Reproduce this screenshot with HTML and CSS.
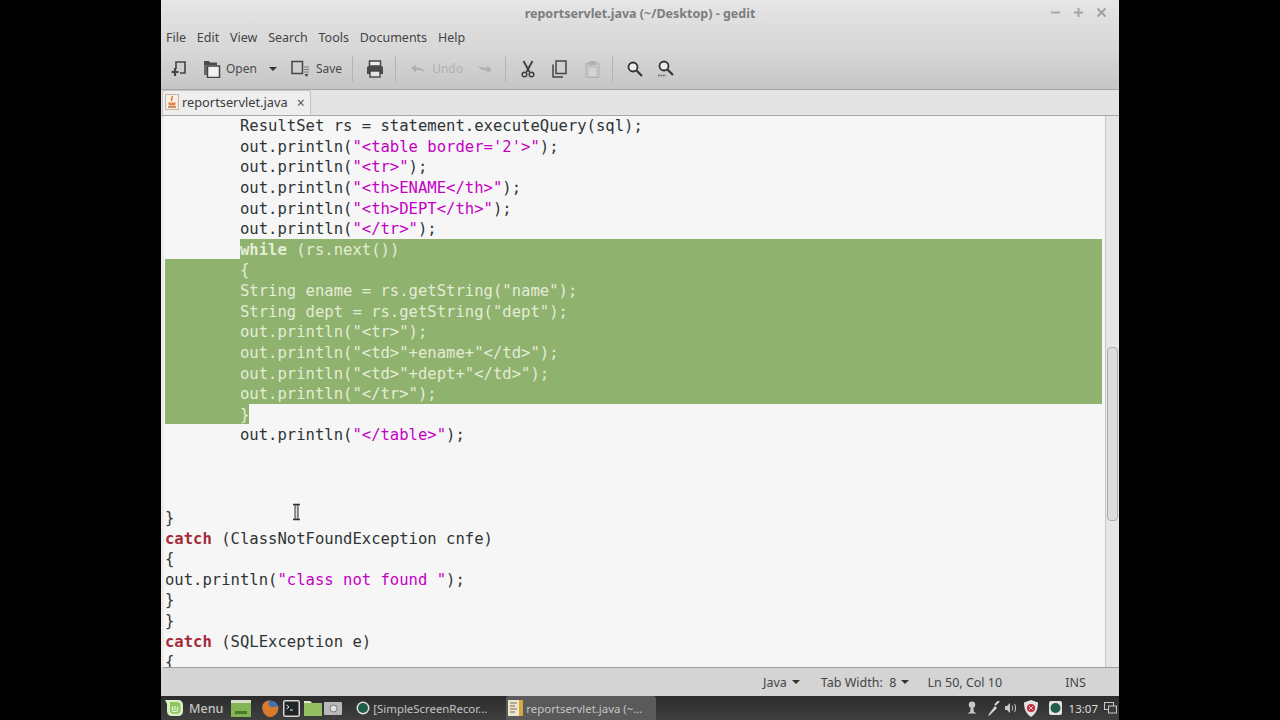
FILE: index.html
```html
<!DOCTYPE html>
<html>
<head>
  <title>reportservlet.java (~/Desktop) - gedit</title>
  <link rel="stylesheet" href="styles.css">
</head>
<body>
  <div class="window">
    <div class="titlebar">
      <div class="title">reportservlet.java (~/Desktop) - gedit</div>
      <div class="win-buttons">
        <svg width="11" height="11" viewBox="0 0 11 11"><path d="M1 5.500h9" stroke="#a8a8a8" stroke-width="2"/></svg>
        <svg width="11" height="11" viewBox="0 0 11 11"><path d="M1 5.500h9M5.500 1v9" stroke="#a4a4a4" stroke-width="2"/></svg>
        <svg width="11" height="11" viewBox="0 0 11 11"><path d="M1.500 1.500l8 8M9.500 1.500l-8 8" stroke="#a0a0a0" stroke-width="2"/></svg>
      </div>
    </div>

    <div class="menubar">
      <span>File</span><span>Edit</span><span>View</span><span>Search</span><span>Tools</span><span>Documents</span><span>Help</span>
    </div>

    <div class="toolbar">
      <svg class="tb-new" width="16" height="18" viewBox="0 0 16 18"><path d="M5 9V2h9v11h-5" fill="none" stroke="#444" stroke-width="1.600"/><path d="M4 8v8M0.500 12h7" stroke="#444" stroke-width="2.200"/></svg>
      <svg class="tb-open" width="18" height="18" viewBox="0 0 18 18"><path d="M1 1h5l1 1.500h7V5H1z" fill="#4a4a4a"/><path d="M1 5h3v10H1z" fill="#6a6a6a"/><rect x="4.500" y="6" width="12" height="11.500" fill="#f0f0f0" stroke="#444" stroke-width="1.500"/></svg>
      <span class="tb-label">Open</span>
      <span class="tb-arrow"></span>
      <svg class="tb-save" width="20" height="18" viewBox="0 0 20 18"><rect x="1" y="1.500" width="10.500" height="12" fill="none" stroke="#444" stroke-width="1.500"/><path d="M13 7h5M13 9.500h5M13 12h5" stroke="#777" stroke-width="1.200"/><path d="M13.500 14h4l-2 3z" fill="#444"/></svg>
      <span class="tb-label">Save</span>
      <span class="tb-sep sep-a"></span>
      <svg class="tb-print" width="18" height="18" viewBox="0 0 18 18"><rect x="3.500" y="1" width="11" height="5" fill="#eee" stroke="#444" stroke-width="1.500"/><path d="M1 8c0-1.500 1-2 2-2h12c1 0 2 .5 2 2v6H1z" fill="#4a4a4a"/><rect x="4" y="11" width="10" height="6" fill="#e4e4e4" stroke="#444" stroke-width="1.400"/></svg>
      <span class="tb-sep sep-b"></span>
      <svg class="tb-undo" width="16" height="10" viewBox="0 0 16 10"><path d="M1 4l5-3v2.500c4 0 7 1 9 5-3-2-5-2.200-9-2.200V8.500z" fill="#b0b0b0"/></svg>
      <span class="tb-label off">Undo</span>
      <svg class="tb-redo" width="16" height="10" viewBox="0 0 16 10"><path d="M15 6l-5 3V6.500C6 6.500 3 5.500 1 1.500c3 2 5 2.200 9 2.200V1.500z" fill="#b0b0b0"/></svg>
      <span class="tb-sep sep-c"></span>
      <svg class="tb-cut" width="14" height="18" viewBox="0 0 14 18"><path d="M2.500 1l6 11M11.500 1l-6 11" stroke="#3f3f3f" stroke-width="1.800"/><circle cx="3.500" cy="14.500" r="2.300" fill="none" stroke="#3f3f3f" stroke-width="1.500"/><circle cx="10.500" cy="14.500" r="2.300" fill="none" stroke="#3f3f3f" stroke-width="1.500"/></svg>
      <svg class="tb-copy" width="15" height="18" viewBox="0 0 15 18"><rect x="4" y="1" width="10" height="12.500" fill="none" stroke="#444" stroke-width="1.500"/><path d="M1 4.500V17h10" fill="none" stroke="#444" stroke-width="1.500"/></svg>
      <svg class="tb-paste" width="15" height="18" viewBox="0 0 15 18"><rect x="1" y="3" width="13" height="14.500" rx="1" fill="#c4c4c4" stroke="#b0b0b0"/><rect x="4" y="1" width="7" height="4" rx="1" fill="#b0b0b0"/><rect x="4" y="8" width="7" height="8" fill="#d4d4d4"/></svg>
      <span class="tb-sep sep-d"></span>
      <svg class="tb-find" width="16" height="16" viewBox="0 0 16 16"><circle cx="6" cy="6" r="4.500" fill="#ececec" stroke="#333" stroke-width="1.800"/><path d="M9.500 9.500l5.500 5.500" stroke="#333" stroke-width="2.200"/></svg>
      <svg class="tb-replace" width="17" height="17" viewBox="0 0 17 17"><circle cx="7" cy="6" r="4.500" fill="#ececec" stroke="#333" stroke-width="1.800"/><path d="M10.500 9.500l5.500 5.500" stroke="#333" stroke-width="2.200"/><path d="M1 15.500h8" stroke="#555" stroke-width="1.400" stroke-dasharray="1.500 1"/></svg>
    </div>

    <div class="tabbar">
      <div class="tab">
        <svg width="14" height="16" viewBox="0 0 14 16"><rect x="0.500" y="0.500" width="13" height="15" fill="#f6efe6" stroke="#c4b8a8"/><path d="M7 2c1.500 2-2 3 0 5" fill="none" stroke="#d8702a" stroke-width="1.400"/><path d="M3 8.500h8l-1 3H4z" fill="#e08a4a"/><path d="M3 13h8" stroke="#c2672a" stroke-width="1.400"/></svg>
        <span class="tab-name">reportservlet.java</span>
        <span class="tab-close">×</span>
      </div>
    </div>

    <div class="editor">
      <div class="code">
        <div class="line">        ResultSet rs = statement.executeQuery(sql);</div>
        <div class="line">        out.println(<i>"&lt;table border='2'&gt;"</i>);</div>
        <div class="line">        out.println(<i>"&lt;tr&gt;"</i>);</div>
        <div class="line">        out.println(<i>"&lt;th&gt;ENAME&lt;/th&gt;"</i>);</div>
        <div class="line">        out.println(<i>"&lt;th&gt;DEPT&lt;/th&gt;"</i>);</div>
        <div class="line">        out.println(<i>"&lt;/tr&gt;"</i>);</div>
        <div class="line">        <span class="sel-rest"><b>while</b> (rs.next())</span></div>
        <div class="line sel">        {</div>
        <div class="line sel">        String ename = rs.getString("name");</div>
        <div class="line sel">        String dept = rs.getString("dept");</div>
        <div class="line sel">        out.println("&lt;tr&gt;");</div>
        <div class="line sel">        out.println("&lt;td&gt;"+ename+"&lt;/td&gt;");</div>
        <div class="line sel">        out.println("&lt;td&gt;"+dept+"&lt;/td&gt;");</div>
        <div class="line sel">        out.println("&lt;/tr&gt;");</div>
        <div class="line"><span class="sel-part">        }</span></div>
        <div class="line">        out.println(<i>"&lt;/table&gt;"</i>);</div>
        <div class="line"> </div>
        <div class="line"> </div>
        <div class="line"> </div>
        <div class="line">}</div>
        <div class="line"><b>catch</b> (ClassNotFoundException cnfe)</div>
        <div class="line">{</div>
        <div class="line">out.println(<i>"class not found "</i>);</div>
        <div class="line">}</div>
        <div class="line">}</div>
        <div class="line"><b>catch</b> (SQLException e)</div>
        <div class="line">{</div>
      </div>
      <div class="scrollbar"><div class="thumb"></div></div>
      <svg class="ibeam" width="9" height="18" viewBox="0 0 9 18"><path d="M1 1.500h7M1 16.500h7" stroke="#333" stroke-width="1.600"/><rect x="3" y="2" width="3" height="14" fill="#d8d8d8" stroke="#333"/></svg>
    </div>

    <div class="statusbar">
      <span class="st-lang">Java</span><span class="tb-arrow st-a1"></span>
      <span class="st-tab">Tab Width:&nbsp; 8</span><span class="tb-arrow st-a2"></span>
      <span class="st-pos">Ln 50, Col 10</span>
      <span class="st-ins">INS</span>
    </div>

    <div class="panel">
      <svg class="p-mint" width="19" height="18" viewBox="0 0 19 18"><path d="M0 1h13c3 0 5 2 5 5v6c0 3-2 5-5 5H7c-3 0-5-2-5-5V5z" fill="#dcf0c4"/><path d="M5 3h7c2 0 3.500 1.500 3.500 3.500v5c0 2-1.500 3.200-3.500 3.200H8c-2 0-3-1.200-3-3.200z" fill="#8cc862"/><path d="M7.500 12V7.500M10 11V7M12.500 12V7.500M7.500 12.500h5" fill="none" stroke="#e6f4d8" stroke-width="1.200"/></svg>
      <span class="p-menu">Menu</span>
      <svg class="p-desk" width="20" height="17" viewBox="0 0 20 17"><rect width="20" height="3" fill="#d9decb"/><rect y="3" width="20" height="14" fill="#83b355"/><rect x="4" y="11" width="12" height="3" fill="#4a7a2c"/></svg>
      <svg class="p-fox" width="17" height="17" viewBox="0 0 17 17"><circle cx="8.500" cy="8.500" r="8" fill="#3f73ad"/><path d="M1 4c2-3 5-4 7-3.500C6 2 6 4.500 7.500 6c2 2 6 1 8.500-.5 1.500 6-3 11.500-8 11.500C3 17-1.500 10 1 4z" fill="#dc7a2c"/></svg>
      <svg class="p-term" width="17" height="17" viewBox="0 0 17 17"><rect x="0.750" y="0.750" width="15.500" height="15.500" rx="1.500" fill="#1f2428" stroke="#d4d4d4" stroke-width="1.500"/><path d="M3.500 5l2.500 2-2.500 2M7 10h3" fill="none" stroke="#eee"/></svg>
      <svg class="p-files" width="18" height="16" viewBox="0 0 18 16"><path d="M0 1h6l2 2h10v13H0z" fill="#93bf62"/><path d="M0 1h6l2 2H0z" fill="#dcead0"/></svg>
      <svg class="p-cam" width="18" height="14" viewBox="0 0 18 14"><rect y="1" width="18" height="13" rx="1" fill="#b9b9b9"/><circle cx="9.500" cy="7.500" r="3.500" fill="#e2e2e2" stroke="#777"/></svg>
      <div class="task first">
        <svg width="14" height="14" viewBox="0 0 14 14"><circle cx="7" cy="7" r="6.500" fill="#dedede"/><circle cx="7" cy="7" r="5" fill="#1f5f4a"/></svg>
        <span>[SimpleScreenRecor...</span>
      </div>
      <div class="task active">
        <svg width="15" height="16" viewBox="0 0 15 16"><rect width="15" height="16" fill="#ece5cf"/><path d="M2 3h7M2 6h5M2 9h7M2 12h5" stroke="#7a6a4a"/><path d="M11 0h4v16h-4z" fill="#d9a53c"/></svg>
        <span>reportservlet.java (~...</span>
      </div>
      <div class="tray">
        <svg class="tr-user" width="12" height="16" viewBox="0 0 13 16"><circle cx="6.500" cy="4.500" r="3.500" fill="#c8c8c8"/><path d="M5 8h3l.5 4 3 2H1.500l3-2z" fill="#c8c8c8"/></svg>
        <svg class="tr-plug" width="13" height="15" viewBox="0 0 13 15"><path d="M1 15l1-2 6-8 2 2-7 7z" fill="#d8d8d8"/><path d="M8 4l4-4" stroke="#d8d8d8" stroke-width="2"/></svg>
        <svg class="tr-vol" width="12" height="12" viewBox="0 0 12 12"><path d="M0 4h2l3-3v10L2 8H0z" fill="#c8c8c8"/><path d="M7 3.500c1 1.500 1 3.500 0 5M9.500 2c1.500 2.500 1.500 5.500 0 8" fill="none" stroke="#c8c8c8"/></svg>
        <svg class="tr-shield" width="16" height="17" viewBox="0 0 15 17"><path d="M7.500 0l7 2.500c0 7-2 11-7 14.500C2.500 13.500.5 9.500.5 2.500z" fill="#e6e0e0"/><circle cx="7.500" cy="8" r="4" fill="#c52a3e"/><path d="M5.500 6l4 4M9.500 6l-4 4" stroke="#f2c8cc"/></svg>
        <svg class="tr-rec" width="13" height="14" viewBox="0 0 13 14"><rect width="13" height="14" rx="2" fill="#e2e2e2"/><circle cx="6.500" cy="7" r="5" fill="#1f5f4a"/></svg>
        <span class="clock">13:07</span>
        <svg class="tr-win" width="13" height="12" viewBox="0 0 13 12"><rect x="0.500" y="0.500" width="9" height="7" fill="none" stroke="#c8c8c8"/><rect x="4.500" y="4" width="8" height="7" fill="#3b3b3b" stroke="#c8c8c8"/></svg>
      </div>
    </div>
  </div>
</body>
</html>
```

FILE: styles.css
```css
/* General Styles */
html, body {
  margin: 0;
  padding: 0;
  height: 100%;
  background-color: #000000;
  overflow: hidden;
}

body {
  font-family: "Noto Sans", "Open Sans", sans-serif;
  font-size: 12.500px;
  color: #3c3c3c;
}

.window {
  width: 958px;
  height: 720px;
  margin-left: 161px;
  display: flex;
  flex-direction: column;
  background-color: #d6d6d6;
}

/* Title bar */
.titlebar {
  height: 26px;
  flex: none;
  display: flex;
  align-items: center;
  justify-content: center;
  position: relative;
  background: linear-gradient(#e6e6e6, #dddddd);
}

.title {
  font-size: 12.500px;
  font-weight: bold;
  color: #7d7d7d;
}

.win-buttons {
  position: absolute;
  right: 12px;
  top: 7px;
  display: flex;
  gap: 12px;
}

/* Menu */
.menubar {
  height: 22px;
  flex: none;
  display: flex;
  align-items: center;
  gap: 10.800px;
  padding-left: 5px;
  background: linear-gradient(#dddddd, #d8d8d8);
  color: #444444;
}

/* Toolbar */
.toolbar {
  height: 42px;
  flex: none;
  display: flex;
  align-items: center;
  box-sizing: border-box;
  padding-left: 10px;
  background: linear-gradient(#d8d8d8, #c6c6c6);
  border-bottom: 1px solid #a4a4a4;
}

.tb-label {
  font-size: 12px;
  color: #4a4a4a;
}

.tb-label.off {
  color: #b0b0b0;
}

.tb-arrow {
  display: inline-block;
  width: 0;
  height: 0;
  border-left: 4px solid transparent;
  border-right: 4px solid transparent;
  border-top: 4px solid #333333;
}

.tb-sep {
  width: 1px;
  height: 26px;
  background-color: #b4b4b4;
}

.tb-open { margin-left: 16px; margin-right: 5px; }
.toolbar .tb-arrow { margin-left: 12px; }
.tb-save { margin-left: 14px; margin-right: 5px; }
.sep-a { margin-left: 10px; }
.tb-print { margin-left: 13px; }
.sep-b { margin-left: 11px; }
.tb-undo { margin-left: 14px; margin-right: 6px; }
.tb-redo { margin-left: 14px; }
.sep-c { margin-left: 12px; }
.tb-cut { margin-left: 15px; }
.tb-copy { margin-left: 17px; }
.tb-paste { margin-left: 18px; }
.sep-d { margin-left: 12px; }
.tb-find { margin-left: 14px; }
.tb-replace { margin-left: 14px; }

/* Tabs */
.tabbar {
  height: 26px;
  flex: none;
  display: flex;
  align-items: flex-end;
  box-sizing: border-box;
  padding-left: 1px;
  background-color: #e4e4e4;
  border-bottom: 1px solid #a8a8a8;
}

.tab {
  height: 25px;
  display: flex;
  align-items: center;
  box-sizing: border-box;
  padding: 0 5px 2px 2px;
  gap: 3px;
  background-color: #eeeeee;
  border: 1px solid #c4c4c4;
  border-bottom: none;
  border-radius: 3px 3px 0 0;
}

.tab-name {
  font-size: 12.800px;
  color: #3c3c3c;
}

.tab-close {
  margin-left: 6px;
  color: #555555;
  font-size: 14px;
}

/* Editor */
.editor {
  height: 552px;
  flex: none;
  display: flex;
  position: relative;
  overflow: hidden;
  background-color: #f6f6f6;
  border-left: 3px solid #ececec;
  border-bottom: 1px solid #9c9c9c;
  box-sizing: border-box;
}

.code {
  width: 937px;
  flex: none;
  margin-left: 1px;
  margin-top: -1px;
  font-family: "DejaVu Sans Mono", monospace;
  font-size: 15.570px;
  color: #2e3436;
}

.line {
  height: 20.640px;
  line-height: 22.640px;
  white-space: pre;
}

.code i {
  font-style: normal;
  color: #c400c4;
}

.code b {
  font-weight: bold;
  color: #a52a3a;
}

.sel,
.sel-rest,
.sel-part {
  background-color: #8fb26f;
  color: #e4ecd6;
}

.sel-rest {
  display: inline-block;
  width: 862px;
  height: 20.640px;
}

.sel-rest b {
  color: #e4ecd6;
}

.sel-part {
  display: inline-block;
  width: 84px;
  height: 20.640px;
}

.scrollbar {
  width: 14px;
  margin-left: 3px;
  flex: none;
  position: relative;
  background-color: #e6e6e6;
  border-left: 1px solid #c8c8c8;
  box-sizing: border-box;
}

.thumb {
  position: absolute;
  left: 1px;
  top: 231px;
  width: 9px;
  height: 172px;
  background-color: #dcdcdc;
  border: 1px solid #ababab;
  border-radius: 4px;
}

.ibeam {
  position: absolute;
  left: 128px;
  top: 387px;
}

/* Status bar */
.statusbar {
  height: 28px;
  flex: none;
  display: flex;
  align-items: center;
  box-sizing: border-box;
  padding-left: 602px;
  background-color: #d4d4d4;
  color: #444444;
}

.st-a1 { margin-left: 5px; }
.st-tab { margin-left: 21px; }
.st-a2 { margin-left: 5px; }
.st-pos { margin-left: 18px; }
.st-ins { margin-left: 63px; }

/* Panel */
.panel {
  flex: 1;
  display: flex;
  align-items: center;
  padding-left: 4px;
  background: linear-gradient(#2c2c2c, #403f3f);
  color: #c4c4c4;
}

.p-menu {
  margin-left: 5px;
  font-weight: 500;
}

.p-desk { margin-left: 8px; }
.p-fox { margin-left: 11px; }
.p-term { margin-left: 4px; }
.p-files { margin-left: 4px; }
.p-cam { margin-left: 2px; }

.task {
  width: 154px;
  height: 24px;
  display: flex;
  align-items: center;
  gap: 3px;
  font-size: 11.400px;
  box-sizing: border-box;
  padding-left: 4px;
}

.task.first {
  margin-left: 10px;
}

.task.active {
  width: 150px;
  padding-left: 2px;
  background-color: #5a5a5a;
  border-radius: 3px 3px 0 0;
}

.tray {
  margin-left: auto;
  display: flex;
  align-items: center;
  padding-right: 2px;
}

.tr-plug { margin-left: 9px; }
.tr-vol { margin-left: 5px; }
.tr-shield { margin-left: 6px; }
.tr-rec { margin-left: 10px; }
.tr-win { margin-left: 6px; }

.clock {
  margin-left: 7px;
  font-size: 11.500px;
  color: #dddddd;
}
```
